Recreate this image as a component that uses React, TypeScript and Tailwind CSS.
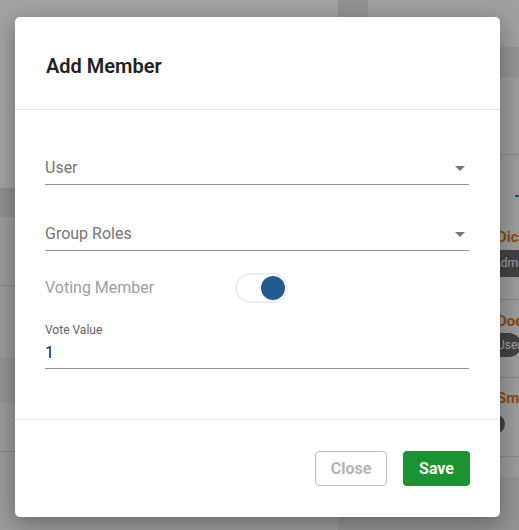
import { useState } from "react";

function Caret() {
  return (
    <svg width="10" height="5" viewBox="0 0 10 5" className="shrink-0">
      <path d="M0 0h10L5 5z" fill="#757575" />
    </svg>
  );
}

function SelectField({ label }: { label: string }) {
  return (
    <div className="flex items-center justify-between border-b border-[#949494] pb-1">
      <span className="text-base leading-6 text-[#757575]">{label}</span>
      <span className="mr-1">
        <Caret />
      </span>
    </div>
  );
}

function Background() {
  return (
    <div className="flex min-h-[530px] bg-[#e6e6e6]">
      {/* left list */}
      <div className="w-[338px] shrink-0 flex flex-col">
        <div className="h-[188px] bg-white" />
        <div className="h-[29px] bg-[#e2e2e2]" />
        <div className="h-[69px] bg-[#f4f4f4] border-b border-[#d6d6d6]" />
        <div className="h-[72px] bg-[#f4f4f4]" />
        <div className="h-[45px] bg-[#e8e8e8]" />
        <div className="h-[49px] bg-[#f4f4f4] border-b border-[#d6d6d6]" />
        <div className="h-[78px] bg-[#f4f4f4]" />
      </div>
      <div className="w-[30px] shrink-0" />
      {/* right card */}
      <div className="flex-1 flex flex-col">
        <div className="bg-white flex flex-col h-[477px]">
          <div className="h-[47px] bg-[#fafafa]" />
          <div className="h-[30px] bg-[#e6e6e6]" />
          <div className="h-[78px] border-b border-[#d6d6d6] bg-[#f5f5f5]" />
          <div className="h-[44px] bg-[#f5f5f5] flex items-end pl-[147px]">
            <div className="h-[2px] w-20 bg-[#1d7fa0] mb-[2px]" />
          </div>
          <div className="bg-[#f5f5f5] flex-1 pl-[129px] text-[15px] font-bold text-[#d8740f]">
            <div className="h-[101px] border-b border-[#d6d6d6] pt-[28px]">
              <div className="leading-5">Dickson</div>
              <div className="mt-[3px] h-[27px] bg-[#686868] text-[12px] font-normal text-white leading-[27px] -ml-2 pl-1">
                Administrator
              </div>
            </div>
            <div className="h-[78px] border-b border-[#d6d6d6] pt-[11px]">
              <div className="leading-5">Doe</div>
              <div className="mt-[2px] h-[24px] w-14 rounded-full bg-[#686868] text-[12px] font-normal text-white leading-[24px] -ml-8 pl-8">
                User
              </div>
            </div>
            <div className="h-[79px] border-b border-[#d6d6d6] pt-[10px]">
              <div className="leading-5">Smith</div>
              <div className="mt-[6px] h-[20px] w-8 rounded-full bg-[#686868] -ml-6" />
            </div>
          </div>
        </div>
      </div>
    </div>
  );
}

export default function App() {
  const [voting, setVoting] = useState(true);

  return (
    <div className="relative w-[519px] h-[530px] overflow-hidden font-['Roboto',sans-serif]">
      <Background />

      {/* overlay */}
      <div className="absolute inset-0 bg-black/[0.36]" />

      {/* dialog */}
      <div className="absolute left-[15px] top-[17px] w-[485px] h-[500px] bg-white rounded-[5px] shadow-[0_6px_24px_rgba(0,0,0,0.35)] flex flex-col">
        <div className="px-[31px] pt-[35px] pb-[29px] border-b border-[#e5e5e5]">
          <h2 className="text-[20px] leading-7 font-semibold text-[#212121]">Add Member</h2>
        </div>

        <div className="flex-1 px-[30px] pt-[46px] pr-[31px] border-b border-[#e5e5e5]">
          <SelectField label="User" />
          <div className="mt-[37px]">
            <SelectField label="Group Roles" />
          </div>

          <div className="mt-[22px] flex items-center">
            <span className="w-[190px] text-base leading-6 text-[#9e9e9e]">Voting Member</span>
            <button
              onClick={() => setVoting((v) => !v)}
              className={`w-[53px] h-[30px] rounded-full border-2 border-[#eeeeee] bg-white flex items-center px-[1px] ${
                voting ? "justify-end" : "justify-start"
              }`}
            >
              <span className="block w-6 h-6 rounded-full bg-[#245a92]" />
            </button>
          </div>

          <div className="mt-[19px]">
            <div className="text-[12px] leading-4 text-[#616161]">Vote Value</div>
            <div className="mt-[3px] border-b border-[#949494] pb-[3px] text-base leading-6 text-[#212121]">1</div>
          </div>
        </div>

        <div className="h-[97px] shrink-0 flex items-center justify-end gap-4 pr-[30px]">
          <button className="h-[35px] w-[72px] rounded-[4px] border border-[#bdbdbd] text-base font-bold text-[#b3b3b3]">
            Close
          </button>
          <button className="h-[35px] w-[67px] rounded-[4px] bg-[#1a9332] text-base font-bold text-white">
            Save
          </button>
        </div>
      </div>
    </div>
  );
}
